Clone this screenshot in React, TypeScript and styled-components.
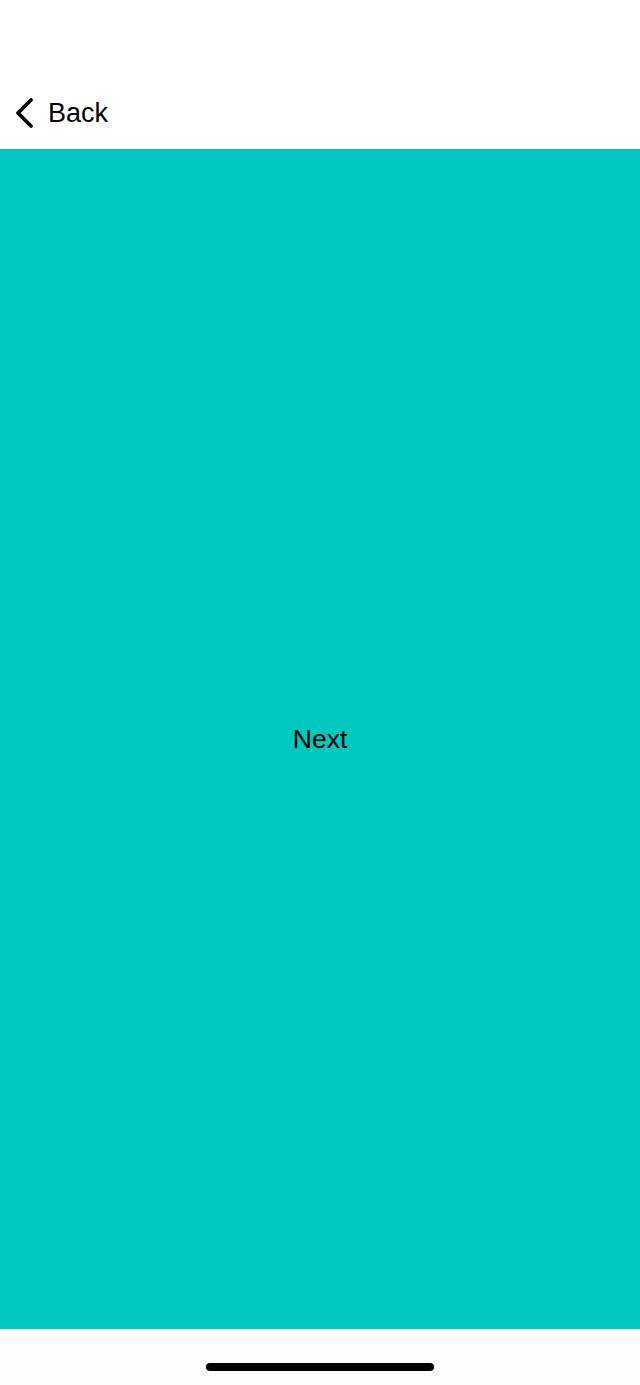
import React from "react";
import styled, { createGlobalStyle } from "styled-components";

const GlobalStyle = createGlobalStyle`
  html, body {
    margin: 0;
    padding: 0;
    background: #ffffff;
    font-family: "Liberation Sans", Arial, sans-serif;
  }
`;

const Screen = styled.div`
  width: 640px;
  height: 1385px;
  display: flex;
  flex-direction: column;
`;

const NavBar = styled.div`
  height: 149px;
  background: #ffffff;
  display: flex;
  align-items: flex-end;
  padding: 0 0 20px 14px;
  box-sizing: border-box;
`;

const BackButton = styled.button`
  display: flex;
  align-items: center;
  gap: 14px;
  background: none;
  border: none;
  padding: 0;
  cursor: pointer;
  color: #000;
  font-family: "Liberation Sans", Arial, sans-serif;
  font-size: 27px;
`;

const Content = styled.div`
  flex: 1;
  background: #00c8be;
  display: flex;
  align-items: center;
  justify-content: center;
`;

const NextLabel = styled.span`
  font-size: 26.5px;
  color: #000;
  margin-top: 1px;
`;

const HomeArea = styled.div`
  height: 56px;
  background: #fdfdfd;
  display: flex;
  justify-content: center;
  padding-top: 34px;
  box-sizing: border-box;
`;

const HomeIndicator = styled.div`
  width: 228px;
  height: 8px;
  border-radius: 4px;
  background: #000;
`;

const App = (): JSX.Element => {
  return (
    <React.Fragment>
      <GlobalStyle />
      <Screen>
        <NavBar>
          <BackButton>
            <svg width="20" height="32" viewBox="0 0 20 32">
              <path d="M17 3 L4 16 L17 29" fill="none" stroke="#000" strokeWidth="3.8" strokeLinecap="round" strokeLinejoin="round" />
            </svg>
            Back
          </BackButton>
        </NavBar>
        <Content>
          <NextLabel>Next</NextLabel>
        </Content>
        <HomeArea>
          <HomeIndicator />
        </HomeArea>
      </Screen>
    </React.Fragment>
  );
};

export default App;
